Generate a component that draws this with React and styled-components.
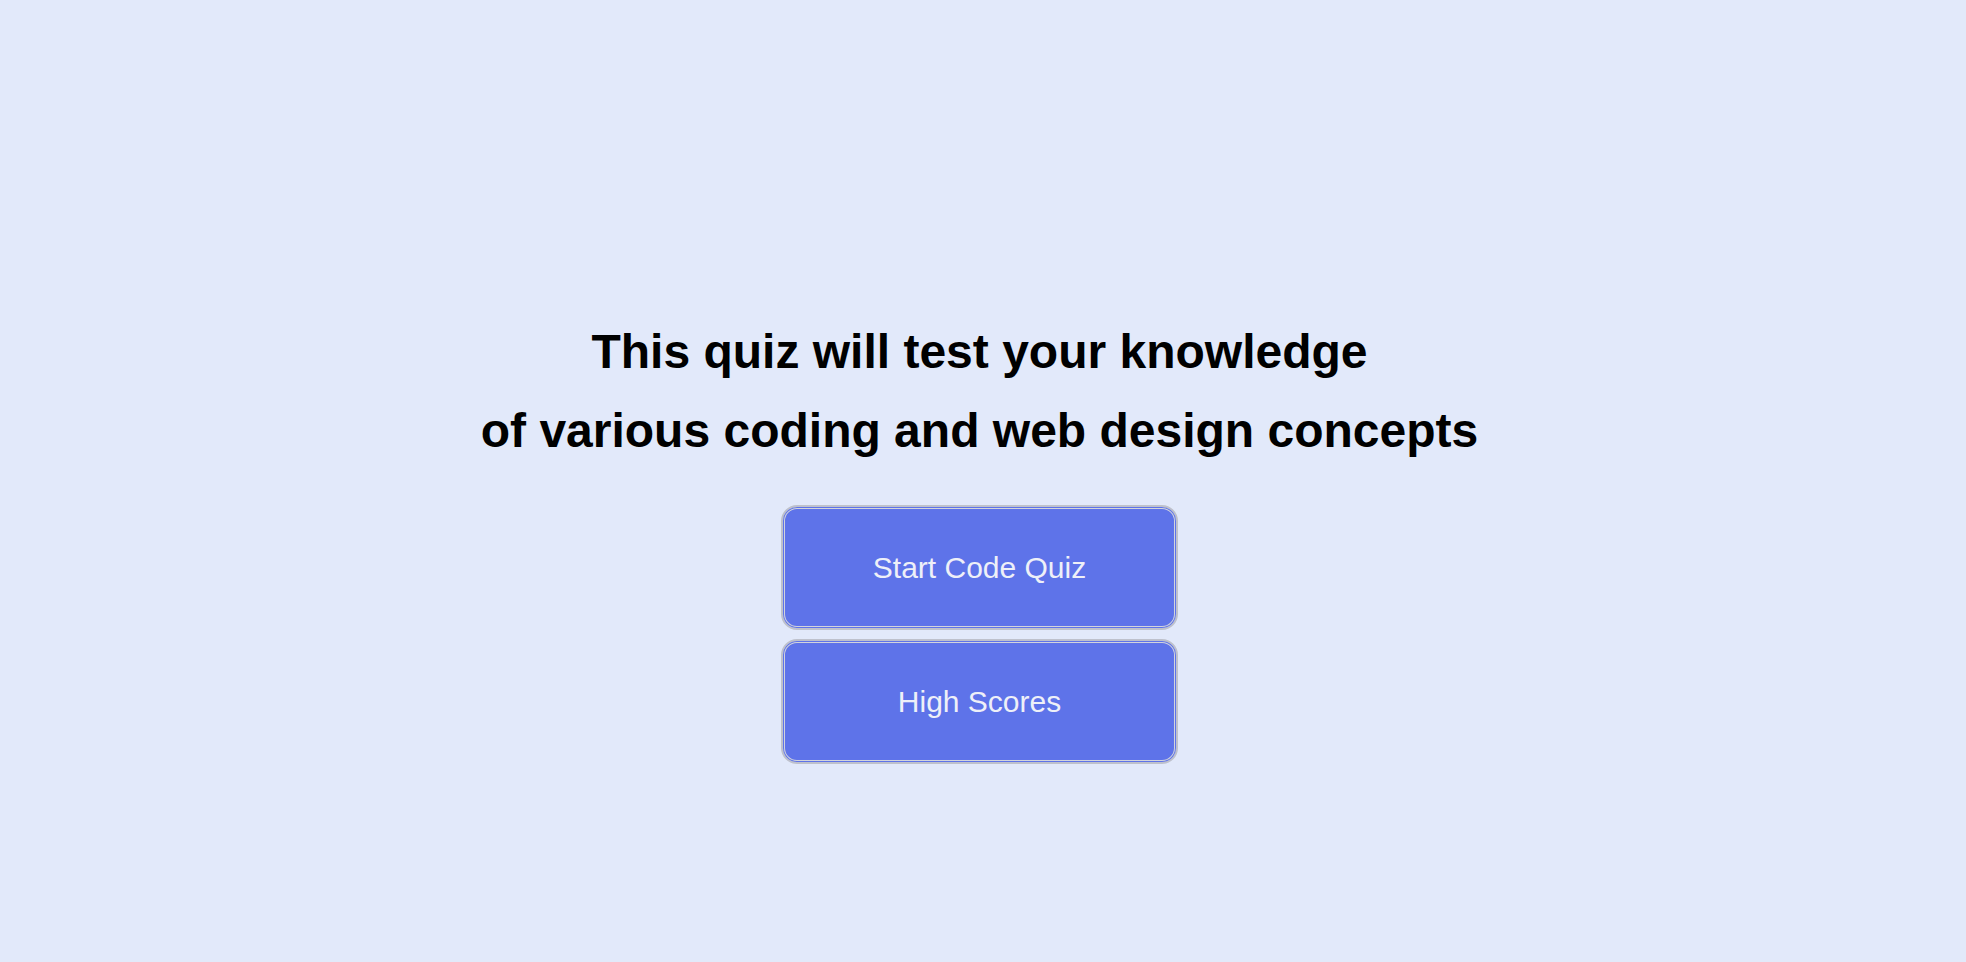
import React from "react";
import styled, { createGlobalStyle } from "styled-components";

const GlobalStyle = createGlobalStyle`
  html, body {
    margin: 0;
    padding: 0;
    background-color: #e2e9fa;
    font-family: "Liberation Sans", Arial, Helvetica, sans-serif;
  }
`;

const Page = styled.main`
  min-height: 962px;
  box-sizing: border-box;
  padding: 312px 7px 0 0;
  display: flex;
  flex-direction: column;
  align-items: center;
`;

const Intro = styled.h1`
  margin: 0 0 35px;
  font-size: 48px;
  font-weight: 700;
  line-height: 79px;
  color: #000;
  text-align: center;
`;

const Menu = styled.div`
  display: flex;
  flex-direction: column;
  gap: 9px;
`;

const MenuButton = styled.button`
  width: 397px;
  height: 125px;
  box-sizing: border-box;
  border: 2px solid #bec1cc;
  border-radius: 16px;
  /* thin blue + grey rings just inside the outer border */
  box-shadow: inset 0 0 0 1px #5e73e9, inset 0 0 0 2px #d2d4dc;
  background-color: #5e73e9;
  color: #eef0f8;
  font-family: "Liberation Sans", Arial, Helvetica, sans-serif;
  font-size: 30px;
  cursor: pointer;
`;

const App = () => {
  return (
    <>
      <GlobalStyle />
      <Page>
        <Intro>
          This quiz will test your knowledge
          <br />
          of various coding and web design concepts
        </Intro>
        <Menu>
          <MenuButton>Start Code Quiz</MenuButton>
          <MenuButton>High Scores</MenuButton>
        </Menu>
      </Page>
    </>
  );
};

export default App;
